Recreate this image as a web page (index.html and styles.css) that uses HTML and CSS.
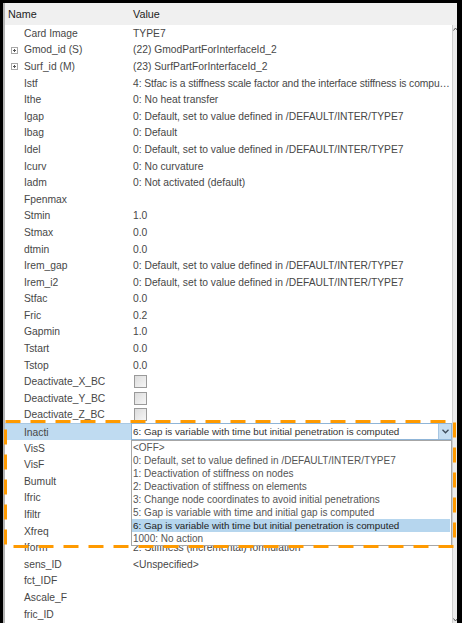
FILE: index.html
```html
<!DOCTYPE html>
<html>
<head>
<meta charset="utf-8">
<link rel="stylesheet" href="styles.css">
</head>
<body>
<div class="frame">
  <div class="header">
    <span class="hname">Name</span>
    <span class="hval">Value</span>
  </div>
  <div class="main">
    <div class="list">
      <div class="row"><div class="name">Card Image</div><div class="val">TYPE7</div></div>
      <div class="row"><div class="name"><span class="plus"><svg width="7" height="7" viewBox="0 0 7 7"><rect x="0.5" y="0.5" width="6" height="6" fill="#fff" stroke="#a8a8a8"/><path d="M2 3.5h3M3.5 2v3" stroke="#555"/></svg></span>Gmod_id (S)</div><div class="val">(22) GmodPartForInterfaceId_2</div></div>
      <div class="row"><div class="name"><span class="plus"><svg width="7" height="7" viewBox="0 0 7 7"><rect x="0.5" y="0.5" width="6" height="6" fill="#fff" stroke="#a8a8a8"/><path d="M2 3.5h3M3.5 2v3" stroke="#555"/></svg></span>Surf_id (M)</div><div class="val">(23) SurfPartForInterfaceId_2</div></div>
      <div class="row"><div class="name">Istf</div><div class="val istf">4: Stfac is a stiffness scale factor and the interface stiffness is computed from the Stfac value and the main segment properties</div></div>
      <div class="row"><div class="name">Ithe</div><div class="val">0: No heat transfer</div></div>
      <div class="row"><div class="name">Igap</div><div class="val">0: Default, set to value defined in /DEFAULT/INTER/TYPE7</div></div>
      <div class="row"><div class="name">Ibag</div><div class="val">0: Default</div></div>
      <div class="row"><div class="name">Idel</div><div class="val">0: Default, set to value defined in /DEFAULT/INTER/TYPE7</div></div>
      <div class="row"><div class="name">Icurv</div><div class="val">0: No curvature</div></div>
      <div class="row"><div class="name">Iadm</div><div class="val">0: Not activated (default)</div></div>
      <div class="row"><div class="name">Fpenmax</div><div class="val"></div></div>
      <div class="row"><div class="name">Stmin</div><div class="val">1.0</div></div>
      <div class="row"><div class="name">Stmax</div><div class="val">0.0</div></div>
      <div class="row"><div class="name">dtmin</div><div class="val">0.0</div></div>
      <div class="row"><div class="name">Irem_gap</div><div class="val">0: Default, set to value defined in /DEFAULT/INTER/TYPE7</div></div>
      <div class="row"><div class="name">Irem_i2</div><div class="val">0: Default, set to value defined in /DEFAULT/INTER/TYPE7</div></div>
      <div class="row"><div class="name">Stfac</div><div class="val">0.0</div></div>
      <div class="row"><div class="name">Fric</div><div class="val">0.2</div></div>
      <div class="row"><div class="name">Gapmin</div><div class="val">1.0</div></div>
      <div class="row"><div class="name">Tstart</div><div class="val">0.0</div></div>
      <div class="row"><div class="name">Tstop</div><div class="val">0.0</div></div>
      <div class="row"><div class="name">Deactivate_X_BC</div><div class="val"><span class="check"></span></div></div>
      <div class="row"><div class="name">Deactivate_Y_BC</div><div class="val"><span class="check"></span></div></div>
      <div class="row"><div class="name">Deactivate_Z_BC</div><div class="val"><span class="check"></span></div></div>
      <div class="row sel">
        <div class="name">Inacti</div>
        <div class="combo">
          <span class="ctext">6: Gap is variable with time but initial penetration is computed</span>
          <span class="cbtn"><svg width="7" height="5" viewBox="0 0 7 5"><path d="M0.5 0.8L3.5 3.8L6.5 0.8" fill="none" stroke="#3c4a5a" stroke-width="1.3"/></svg></span>
        </div>
        <div class="drop">
          <div class="item">&lt;OFF&gt;</div>
          <div class="item">0: Default, set to value defined in /DEFAULT/INTER/TYPE7</div>
          <div class="item">1: Deactivation of stiffness on nodes</div>
          <div class="item">2: Deactivation of stiffness on elements</div>
          <div class="item">3: Change node coordinates to avoid initial penetrations</div>
          <div class="item">5: Gap is variable with time and initial gap is computed</div>
          <div class="item hi">6: Gap is variable with time but initial penetration is computed</div>
          <div class="item">1000: No action</div>
        </div>
      </div>
      <div class="row"><div class="name">VisS</div><div class="val"></div></div>
      <div class="row"><div class="name">VisF</div><div class="val"></div></div>
      <div class="row"><div class="name">Bumult</div><div class="val"></div></div>
      <div class="row"><div class="name">Ifric</div><div class="val"></div></div>
      <div class="row"><div class="name">Ifiltr</div><div class="val"></div></div>
      <div class="row"><div class="name">Xfreq</div><div class="val"></div></div>
      <div class="row"><div class="name">Iform</div><div class="val">2: Stiffness (incremental) formulation</div></div>
      <div class="row"><div class="name">sens_ID</div><div class="val">&lt;Unspecified&gt;</div></div>
      <div class="row"><div class="name">fct_IDF</div><div class="val"></div></div>
      <div class="row"><div class="name">Ascale_F</div><div class="val"></div></div>
      <div class="row"><div class="name">fric_ID</div><div class="val"></div></div>
    </div>
    <div class="scroll">
      <svg class="arrow" width="5" height="4" viewBox="0 0 5 4"><path d="M0.5 3.5L2.5 1L4.5 3.5" fill="none" stroke="#555" stroke-width="1"/></svg>
      <div class="thumb"></div>
      <svg class="arrow" width="5" height="4" viewBox="0 0 5 4"><path d="M0.5 0.5L2.5 3L4.5 0.5" fill="none" stroke="#555" stroke-width="1"/></svg>
    </div>
  </div>
  <svg class="dash" width="452" height="128" viewBox="0 0 452 128"><rect x="1.5" y="1.5" width="449" height="125" fill="none" stroke="#ff9a00" stroke-width="3" stroke-dasharray="15 10"/></svg>
</div>
</body>
</html>
```
FILE: styles.css
```css
html, body {
  margin: 0;
  padding: 0;
  background: #000;
  width: 462px;
  height: 623px;
  overflow: hidden;
}
.frame {
  position: relative;
  margin: 3px 5px 0 3px;
  height: 620px;
  background: #fff;
  border-left: 2px solid #b4b4b4;
  display: flex;
  flex-direction: column;
  font-family: "Liberation Sans", Arial, sans-serif;
  font-size: 10.3px;
  color: #474747;
}
.header {
  height: 22px;
  flex: none;
  background: #f0f0f0;
  display: flex;
  align-items: center;
  color: #1e1e1e;
  font-size: 10.8px;
}
.hname {
  width: 125px;
  padding-left: 3px;
}
.list {
  flex: 1;
  min-width: 0;
}
.main {
  flex: 1;
  display: flex;
  min-height: 0;
}
.row {
  height: 16.6px;
  display: flex;
  align-items: center;
}
.name {
  width: 126px;
  flex: none;
  box-sizing: border-box;
  padding-left: 19px;
  position: relative;
  white-space: nowrap;
  height: 100%;
  display: flex;
  align-items: center;
}
.plus {
  position: absolute;
  left: 6px;
  top: 5px;
  width: 7px;
  height: 7px;
  display: block;
}
.plus svg { display: block; }
.val {
  flex: 1;
  min-width: 0;
  padding-left: 2px;
  padding-right: 4px;
  white-space: nowrap;
  overflow: hidden;
  text-overflow: ellipsis;
}
.istf {
  letter-spacing: -0.1px;
  padding-right: 2px;
}
.check {
  display: block;
  width: 11px;
  height: 11px;
  margin-left: 1px;
  border: 1px solid #9a9a9a;
  background: linear-gradient(135deg, #dcdcdc, #f6f6f6);
}
.sel {
  position: relative;
}
.sel .name {
  background: #bfdbf1;
  border-top: 1px solid #a9c9e4;
  box-sizing: border-box;
}
.combo {
  flex: 1;
  height: 100%;
  box-sizing: border-box;
  border: 1px solid #8fb5d8;
  display: flex;
  align-items: center;
  background: #fff;
  color: #333;
  font-size: 9.8px;
}
.ctext {
  flex: 1;
  padding-left: 1px;
  white-space: nowrap;
  overflow: hidden;
}
.cbtn {
  width: 12px;
  height: 100%;
  background: #c6def2;
  border-left: 1px solid #a7c6e2;
  display: flex;
  align-items: center;
  justify-content: center;
}
.drop {
  position: absolute;
  left: 126px;
  right: 0;
  top: 100%;
  height: 106px;
  box-sizing: border-box;
  border: 1px solid #a6a6a6;
  background: #fff;
  padding-top: 0.5px;
  z-index: 2;
}
.item {
  height: 12.95px;
  line-height: 13px;
  padding-left: 1px;
  white-space: nowrap;
  color: #555;
  font-size: 10px;
}
.item.hi {
  background: #b6d6ee;
  color: #222;
  margin-right: 1px;
  font-size: 9.8px;
}
.scroll {
  width: 4px;
  flex: none;
  border-left: 1px solid #cfcfcf;
  background: #ececec;
  display: flex;
  flex-direction: column;
  align-items: center;
  justify-content: space-between;
  padding: 2px 0 1px;
  overflow: hidden;
}
.arrow { display: block; flex: none; }
.thumb {
  flex: 1;
}
.dash {
  position: absolute;
  left: -1px;
  top: 417px;
  z-index: 3;
}
```
